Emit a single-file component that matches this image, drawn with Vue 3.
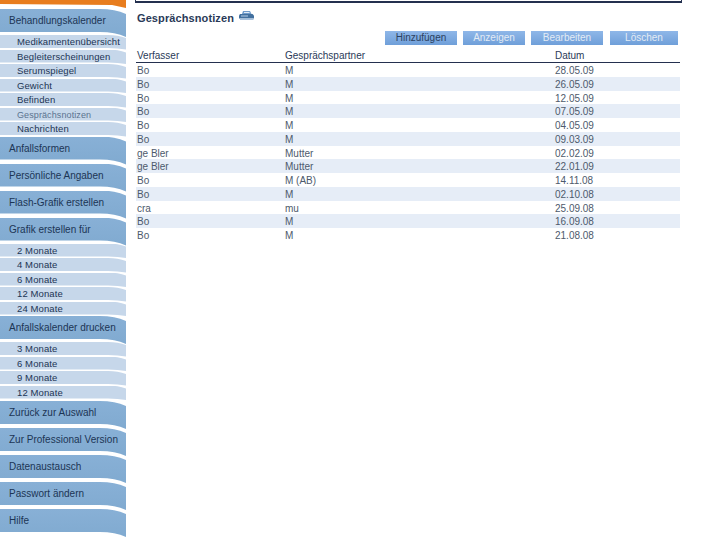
<template>
  <div class="page">
    <nav class="sidebar">
      <div class="nav-top"></div>
      <template v-for="group in navGroups" :key="group.title">
        <a class="nav-main" :class="group.cls">{{ group.title }}</a>
        <div v-if="group.items" class="nav-subs">
          <a v-for="item in group.items" :key="item" class="nav-sub" :class="{ current: item === 'Gesprächsnotizen' }">{{ item }}</a>
        </div>
      </template>
    </nav>

    <main class="content">
      <div class="top-frame"></div>
      <div class="title-row">
        <h1>Gesprächsnotizen</h1>
        <svg class="print-icon" width="15" height="9" viewBox="0 0 15 9">
          <path d="M4 0 H11 L12.5 3 H3 Z" fill="#6f9bcb" />
          <path d="M5 1 H10.5 V2 H5 Z" fill="#dfeaf6" />
          <path d="M1 3 H13.5 L15 4.5 V7.5 H0 V4.5 Z" fill="#42709f" />
          <path d="M2 4.5 H9 V5.5 H2 Z" fill="#b4cce6" />
          <path d="M1 7.5 H14.5 V9 H1 Z" fill="#a9c2de" />
        </svg>
      </div>

      <div class="actions">
        <button class="btn active">Hinzufügen</button>
        <button class="btn show">Anzeigen</button>
        <button class="btn edit">Bearbeiten</button>
        <button class="btn del">Löschen</button>
      </div>

      <div class="table">
        <div class="row head">
          <span>Verfasser</span>
          <span>Gesprächspartner</span>
          <span>Datum</span>
        </div>
        <div v-for="(note, i) in notes" :key="i" class="row" :class="{ odd: i % 2 === 1 }">
          <span>{{ note[0] }}</span>
          <span>{{ note[1] }}</span>
          <span>{{ note[2] }}</span>
        </div>
      </div>
    </main>
  </div>
</template>

<script setup>
const navGroups = [
  {
    title: 'Behandlungskalender',
    items: ['Medikamentenübersicht', 'Begleiterscheinungen', 'Serumspiegel', 'Gewicht', 'Befinden', 'Gesprächsnotizen', 'Nachrichten']
  },
  { title: 'Anfallsformen' },
  { title: 'Persönliche Angaben' },
  { title: 'Flash-Grafik erstellen' },
  { title: 'Grafik erstellen für', items: ['2 Monate', '4 Monate', '6 Monate', '12 Monate', '24 Monate'] },
  { title: 'Anfallskalender drucken', items: ['3 Monate', '6 Monate', '9 Monate', '12 Monate '] },
  { title: 'Zurück zur Auswahl', cls: 'gap-top' },
  { title: 'Zur Professional Version' },
  { title: 'Datenaustausch' },
  { title: 'Passwort ändern' },
  { title: 'Hilfe' }
]

const notes = [
  ['Bo', 'M', '28.05.09'],
  ['Bo', 'M', '26.05.09'],
  ['Bo', 'M', '12.05.09'],
  ['Bo', 'M', '07.05.09'],
  ['Bo', 'M', '04.05.09'],
  ['Bo', 'M', '09.03.09'],
  ['ge Bler', 'Mutter', '02.02.09'],
  ['ge Bler', 'Mutter', '22.01.09'],
  ['Bo', 'M (AB)', '14.11.08'],
  ['Bo', 'M', '02.10.08'],
  ['cra', 'mu', '25.09.08'],
  ['Bo', 'M', '16.09.08'],
  ['Bo', 'M', '21.08.08']
]
</script>

<style>
html,
body {
  margin: 0;
  background: #fff;
}
</style>

<style scoped>
.page {
  display: flex;
  width: 720px;
  height: 540px;
  overflow: hidden;
  font-family: "Liberation Sans", Arial, sans-serif;
}

.sidebar {
  width: 126px;
  flex-shrink: 0;
  display: flex;
  flex-direction: column;
}

.nav-top {
  flex-shrink: 0;
  height: 9px;
  background: #e87d1e;
  clip-path: polygon(0 0, 126px 0, 126px 8px, 112px 5px, 0 4px);
}

.nav-main {
  box-sizing: border-box;
  display: block;
  flex-shrink: 0;
  height: 29px;
  margin-bottom: -2px;
  padding: 6px 0 0 9px;
  font-size: 10px;
  line-height: 12px;
  color: #1c3554;
  background: linear-gradient(#88b0d6, #80aad0);
  clip-path: path("M0 0 H100 Q115 0 126 5 V28 Q115 23 100 23 H0 Z");
}

.gap-top {
  margin-top: 1px;
}

.nav-subs {
  flex-shrink: 0;
  display: flex;
  flex-direction: column;
  margin-top: -1px;
}

.nav-sub {
  box-sizing: border-box;
  display: block;
  flex-shrink: 0;
  height: 14.5px;
  padding-left: 17px;
  font-size: 9.5px;
  line-height: 14px;
  letter-spacing: 0.1px;
  color: #1c3554;
  background: #c6d7ea;
  clip-path: path("M0 0 H108 Q118 0 126 3 V14.5 Q118 13 108 13 H0 Z");
}

.nav-sub.current {
  font-size: 9px;
  color: #5b7390;
}

.content {
  width: 547px;
  margin-left: 9px;
  display: flex;
  flex-direction: column;
}

.top-frame {
  height: 3px;
  box-sizing: border-box;
  border: solid #24304f;
  border-width: 0 1px 2px;
}

.title-row {
  display: flex;
  align-items: center;
  gap: 5px;
  height: 15px;
  margin: 7px 0 0 2px;
}

h1 {
  margin: 0;
  font-size: 11px;
  font-weight: bold;
  letter-spacing: 0.1px;
  color: #2a3a58;
}

.print-icon {
  margin-top: -4px;
}

.actions {
  display: flex;
  height: 14px;
  margin: 6px 0 0 250px;
}

.btn {
  height: 14px;
  padding: 0;
  border: none;
  font-family: inherit;
  font-size: 10px;
  line-height: 14px;
  color: #e3ebf4;
  background: linear-gradient(#8fb7e8, #6f9fd9);
}

.btn.active {
  width: 72px;
  color: #2c4160;
}

.btn.show {
  width: 62px;
  margin-left: 6px;
}

.btn.edit {
  width: 72px;
  margin-left: 6px;
}

.btn.del {
  width: 68px;
  margin-left: 7px;
}

.table {
  margin: 3px 0 0 1px;
  width: 544px;
}

.row {
  display: grid;
  grid-template-columns: 148px 270px 1fr;
  height: 13.75px;
  padding-left: 1px;
  font-size: 10px;
  line-height: 15px;
  color: #4d5a6c;
}

.row.head {
  height: 14px;
  line-height: 15px;
  color: #2a3a58;
  border-bottom: 1px solid #24304f;
}

.row.odd {
  background: #e6edf7;
}
</style>
